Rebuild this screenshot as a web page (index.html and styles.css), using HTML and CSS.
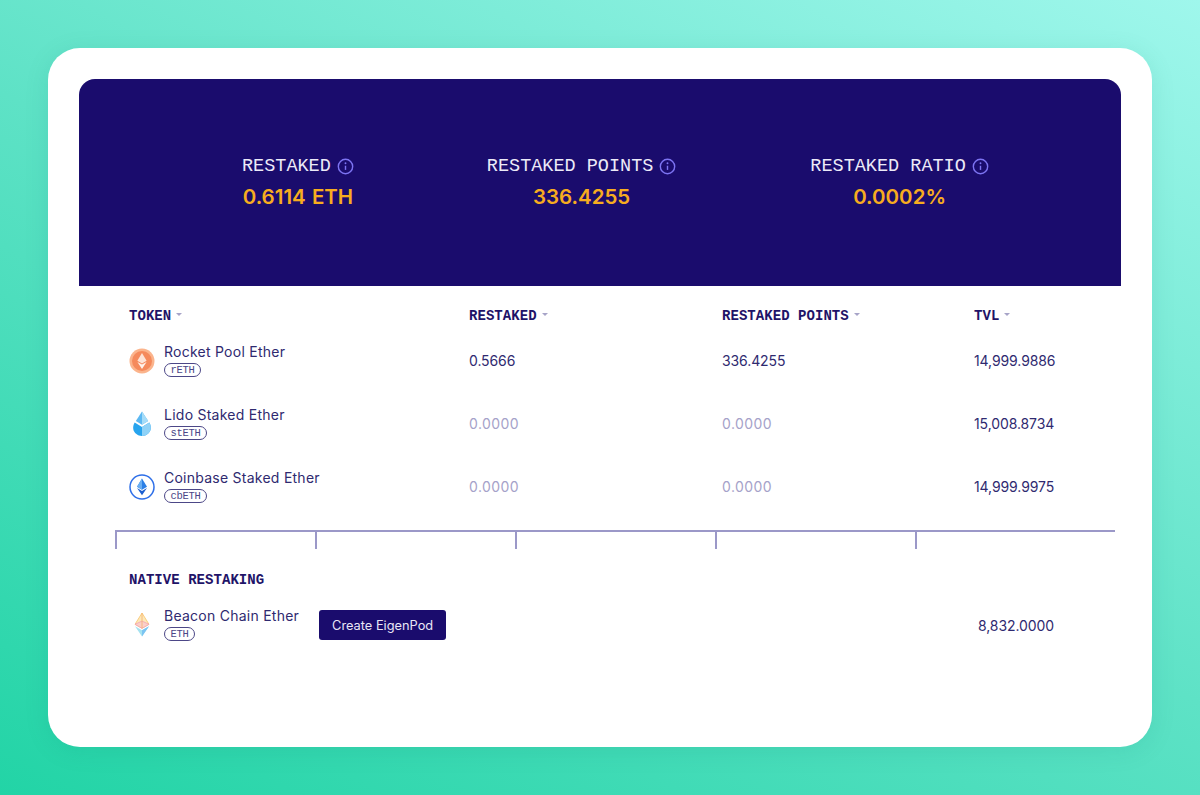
FILE: index.html
```html
<!DOCTYPE html>
<html lang="en">
<head>
<meta charset="utf-8">
<title>Restaked</title>
<link rel="stylesheet" href="styles.css">
</head>
<body>
<main class="card">
  <section class="banner">
    <div class="stat stat-a">
      <div class="stat-label">RESTAKED <svg class="info" viewBox="0 0 18 18"><circle cx="9" cy="9" r="7.6"/><path d="M9 8.2v4.4"/><circle class="dot" cx="9" cy="5.6" r="1"/></svg></div>
      <div class="stat-value">0.6114 ETH</div>
    </div>
    <div class="stat stat-b">
      <div class="stat-label">RESTAKED POINTS <svg class="info" viewBox="0 0 18 18"><circle cx="9" cy="9" r="7.6"/><path d="M9 8.2v4.4"/><circle class="dot" cx="9" cy="5.6" r="1"/></svg></div>
      <div class="stat-value">336.4255</div>
    </div>
    <div class="stat stat-c">
      <div class="stat-label">RESTAKED RATIO <svg class="info" viewBox="0 0 18 18"><circle cx="9" cy="9" r="7.6"/><path d="M9 8.2v4.4"/><circle class="dot" cx="9" cy="5.6" r="1"/></svg></div>
      <div class="stat-value">0.0002%</div>
    </div>
  </section>

  <section class="table">
    <div class="row head">
      <div class="th">TOKEN <i class="caret"></i></div>
      <div class="th">RESTAKED <i class="caret"></i></div>
      <div class="th">RESTAKED POINTS <i class="caret"></i></div>
      <div class="th">TVL <i class="caret"></i></div>
    </div>

    <div class="row body">
      <div class="token">
        <svg class="logo" viewBox="0 0 26 26"><circle cx="13" cy="13" r="12.5" fill="#fbb48c"/><circle cx="13" cy="13" r="10" fill="#f58a5c"/><path d="M13 5l4.6 7.8L13 15.4l-4.6-2.6z" fill="#fde3d6"/><path d="M13 16.6l4.6-2.7L13 21l-4.6-7.1z" fill="#fff1ea"/></svg>
        <div class="names"><div class="name">Rocket Pool Ether</div><span class="pill">rETH</span></div>
      </div>
      <div class="num">0.5666</div><div class="num">336.4255</div><div class="num">14,999.9886</div>
    </div>

    <div class="row body">
      <div class="token">
        <svg class="logo" viewBox="0 0 26 26"><path d="M13 .5l6.2 9.6-6.2 3.6-6.2-3.6z" fill="#5cb8f2"/><path d="M5.7 11.6L13 16l7.3-4.4c2.900 4.800 1.200 9.400-1.400 11.200-3.300 2.900-8.500 2.900-11.800 0C4.500 21 2.800 16.400 5.700 11.600z" fill="#27a4ee"/><path d="M13 13.700l6.200-3.600L13 .5z" fill="#a5dcf8"/><path d="M13 16l7.300-4.400c2.900 4.800 1.200 9.400-1.400 11.200-1.600 1.500-3.700 2.200-5.900 2.200z" fill="#8fd2f7"/></svg>
        <div class="names"><div class="name">Lido Staked Ether</div><span class="pill">stETH</span></div>
      </div>
      <div class="num muted">0.0000</div><div class="num muted">0.0000</div><div class="num">15,008.8734</div>
    </div>

    <div class="row body">
      <div class="token">
        <svg class="logo" viewBox="0 0 26 26"><circle cx="13" cy="13" r="12" fill="#fff" stroke="#2e6fe8" stroke-width="1.500"/><path d="M13 4.500l5 8.300-5 3-5-3z" fill="#2b7fe6"/><path d="M13 16.900l5-3-5 7.300-5-7.300z" fill="#1c5fd0"/><path d="M13 4.500v11.300l-5-3z" fill="#6aaef2"/></svg>
        <div class="names"><div class="name">Coinbase Staked Ether</div><span class="pill">cbETH</span></div>
      </div>
      <div class="num muted">0.0000</div><div class="num muted">0.0000</div><div class="num">14,999.9975</div>
    </div>

    <div class="rule">
      <div class="rule-cell"></div><div class="rule-cell"></div><div class="rule-cell"></div><div class="rule-cell"></div><div class="rule-cell"></div>
    </div>

    <h2 class="section-title">NATIVE RESTAKING</h2>

    <div class="row native">
      <div class="token">
        <svg class="logo" viewBox="0 0 26 26"><path d="M13 1l7 11.300-7 4-7-4z" fill="#fde8b8" stroke="#f9c46b" stroke-width=".8" stroke-linejoin="round"/><path d="M6 12.300l7-3.200 7 3.200-7 4z" fill="#fbd0c8" stroke="#f2a2b4" stroke-width=".8" stroke-linejoin="round"/><path d="M13 1v15.300" stroke="#f5b070" stroke-width=".8"/><path d="M6 14.200l7 4 7-4-7 10.300z" fill="#a5e2f0"/><path d="M13 18.200l7-4-7 10.300z" fill="#7cc4f2"/></svg>
        <div class="names"><div class="name">Beacon Chain Ether</div><span class="pill">ETH</span></div>
        <button class="create">Create EigenPod</button>
      </div>
      <div></div><div></div><div class="num native-tvl">8,832.0000</div>
    </div>
  </section>
</main>
</body>
</html>
```
FILE: styles.css
```css
* { box-sizing: border-box; }
html, body { height: 100%; }
body {
  margin: 0;
  height: 795px;
  overflow: hidden;
  padding: 48px;
  background: linear-gradient(27deg, #22d4a6 0%, #5ee2c6 50%, #9ff7ec 100%);
  font-family: Inter, "Liberation Sans", sans-serif;
  color: #2f2a70;
}
.card {
  height: 699px;
  padding: 31px;
  background: #fff;
  border-radius: 32px;
  box-shadow: 0 4px 24px rgba(20, 120, 110, .12);
}
.banner {
  height: 207px;
  display: flex;
  padding-top: 76px;
  background: #1a0c6d;
  border-radius: 16px 16px 0 0;
  text-align: center;
}
.stat { display: flex; flex-direction: column; align-items: center; }
.stat-a { margin-left: 163px; }
.stat-b { margin-left: 133px; }
.stat-c { margin-left: 134px; }
.stat-label {
  display: flex;
  align-items: center;
  gap: 6px;
  height: 22px;
  font-family: "Liberation Mono", monospace;
  font-size: 18.500px;
  color: #eceaf8;
  white-space: nowrap;
}
.info { width: 17px; height: 17px; fill: none; stroke: #7d74f2; stroke-width: 1.500; }
.info .dot { fill: #7d74f2; stroke: none; }
.stat-value {
  margin-top: 7px;
  font-size: 20.500px;
  line-height: 26px;
  font-weight: 600;
  word-spacing: 1px;
  color: #f7ac1f;
}
.table { position: relative; padding-left: 50px; }
.row { display: grid; grid-template-columns: 340px 253px 252px 1fr; align-items: center; }
.head { height: 43px; padding-top: 16px; }
.th {
  display: flex;
  align-items: center;
  gap: 5px;
  font-family: "Liberation Mono", monospace;
  font-size: 14px;
  font-weight: 700;
  letter-spacing: .05px;
  color: #1f1468;
}
.caret { width: 0; height: 0; border: 3.500px solid transparent; border-top: 3.500px solid #a7a4c8; border-bottom: 0; margin-top: -3px; }
.body { height: 63px; }
.token { display: flex; align-items: center; gap: 9px; }
.logo { width: 26px; height: 26px; flex: none; }
.names { display: flex; flex-direction: column; align-items: flex-start; gap: 3px; padding-bottom: 1px; }
.name { font-size: 14px; line-height: 16px; letter-spacing: .25px; color: #2f2a70; white-space: nowrap; }
.pill {
  height: 14px;
  padding: 0 5.500px;
  border: 1px solid #4c4787;
  border-radius: 8px;
  font-family: "Liberation Mono", monospace;
  font-size: 10.500px;
  line-height: 12px;
  letter-spacing: -.3px;
  color: #4c4787;
}
.num { font-size: 14px; letter-spacing: -.1px; color: #2f2a70; }
.muted { letter-spacing: .4px; color: #a5a2c9; }
.rule {
  display: flex;
  width: 1000px;
  height: 19px;
  margin: 12px 0 0 -14px;
  border-top: 2px solid #9b98c8;
}
.rule-cell { width: 200px; border-left: 2px solid #9b98c8; }
.section-title {
  margin: 22px 0 0;
  font-family: "Liberation Mono", monospace;
  font-size: 14px;
  line-height: 18px;
  font-weight: 700;
  letter-spacing: .05px;
  color: #1f1468;
}
.native { height: 30px; margin-top: 19px; }
.create {
  height: 30px;
  width: 127px;
  margin-left: 11px;
  padding: 0;
  border: 0;
  border-radius: 3px;
  background: #1a0c6d;
  color: #e9e7f6;
  font-family: Inter, "Liberation Sans", sans-serif;
  font-size: 12.800px;
}
.native-tvl { margin-left: 4px; }
```
